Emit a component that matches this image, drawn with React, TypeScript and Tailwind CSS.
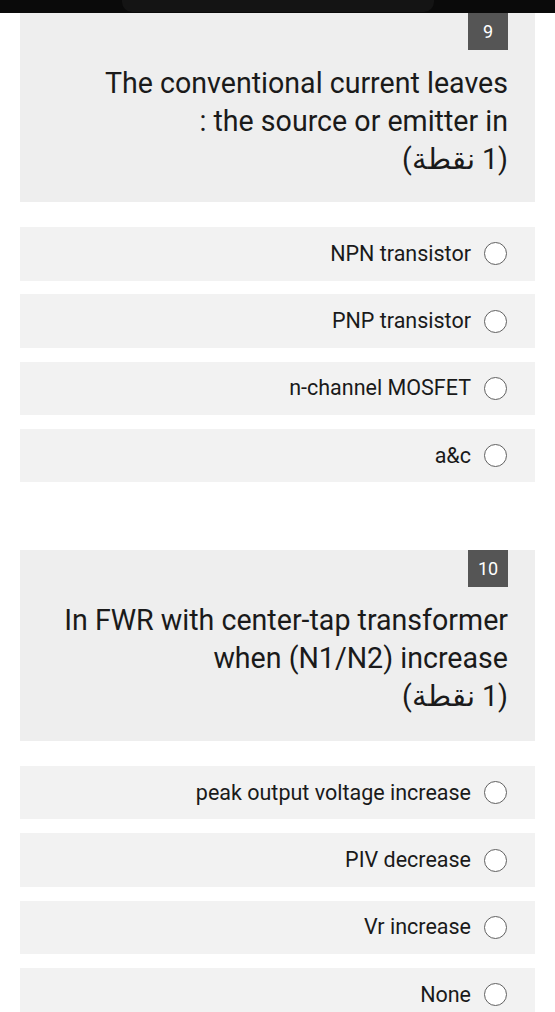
const questions = [
  {
    num: "9",
    lines: ["The conventional current leaves", ": the source or emitter in"],
    options: ["NPN transistor", "PNP transistor", "n-channel MOSFET", "a&c"],
    pb: "pb-[24px]",
  },
  {
    num: "10",
    lines: ["In FWR with center-tap transformer", "when (N1/N2) increase"],
    options: ["peak output voltage increase", "PIV decrease", "Vr increase", "None"],
    pb: "pb-[26px]",
  },
];

function Radio() {
  return <span className="block w-[23px] h-[23px] rounded-full border-[1.5px] border-[#616161] bg-white shrink-0" />;
}

function Question({ q }: { q: (typeof questions)[number] }) {
  return (
    <div className="flex flex-col">
      <div className={`bg-[#eeeeee] px-[27px] ${q.pb}`}>
        <div className="flex justify-end">
          <div className="w-[40px] h-[37px] bg-[#555555] text-white text-[18px] flex items-center justify-center">
            {q.num}
          </div>
        </div>
        <div className="mt-[14px] text-right text-[28.6px] leading-[38px] text-[#1a1a1a]">
          {q.lines.map((l) => (
            <div key={l} className="whitespace-nowrap">{l}</div>
          ))}
          <div dir="rtl" className="text-right">(1 نقطة)</div>
        </div>
      </div>
      <div className="mt-[25px] flex flex-col gap-[13.8px]">
        {q.options.map((o) => (
          <div key={o} className="h-[53.5px] bg-[#f2f2f2] flex items-center justify-end gap-[13px] pr-[28px]">
            <span className="text-[21.5px] text-[#1a1a1a]">{o}</span>
            <Radio />
          </div>
        ))}
      </div>
    </div>
  );
}

export default function App() {
  return (
    <div className="w-[555px] h-[1012px] overflow-hidden bg-white" style={{ fontFamily: "Roboto, 'Noto Sans', sans-serif" }}>
      <div className="h-[13px] bg-[#0a0a0a] flex justify-center">
        <div className="w-[312px] h-[12px] bg-[#141414] rounded-b-[10px]" />
      </div>
      <div className="px-[20px] flex flex-col gap-[67.6px]">
        {questions.map((q) => (
          <Question key={q.num} q={q} />
        ))}
      </div>
    </div>
  );
}
